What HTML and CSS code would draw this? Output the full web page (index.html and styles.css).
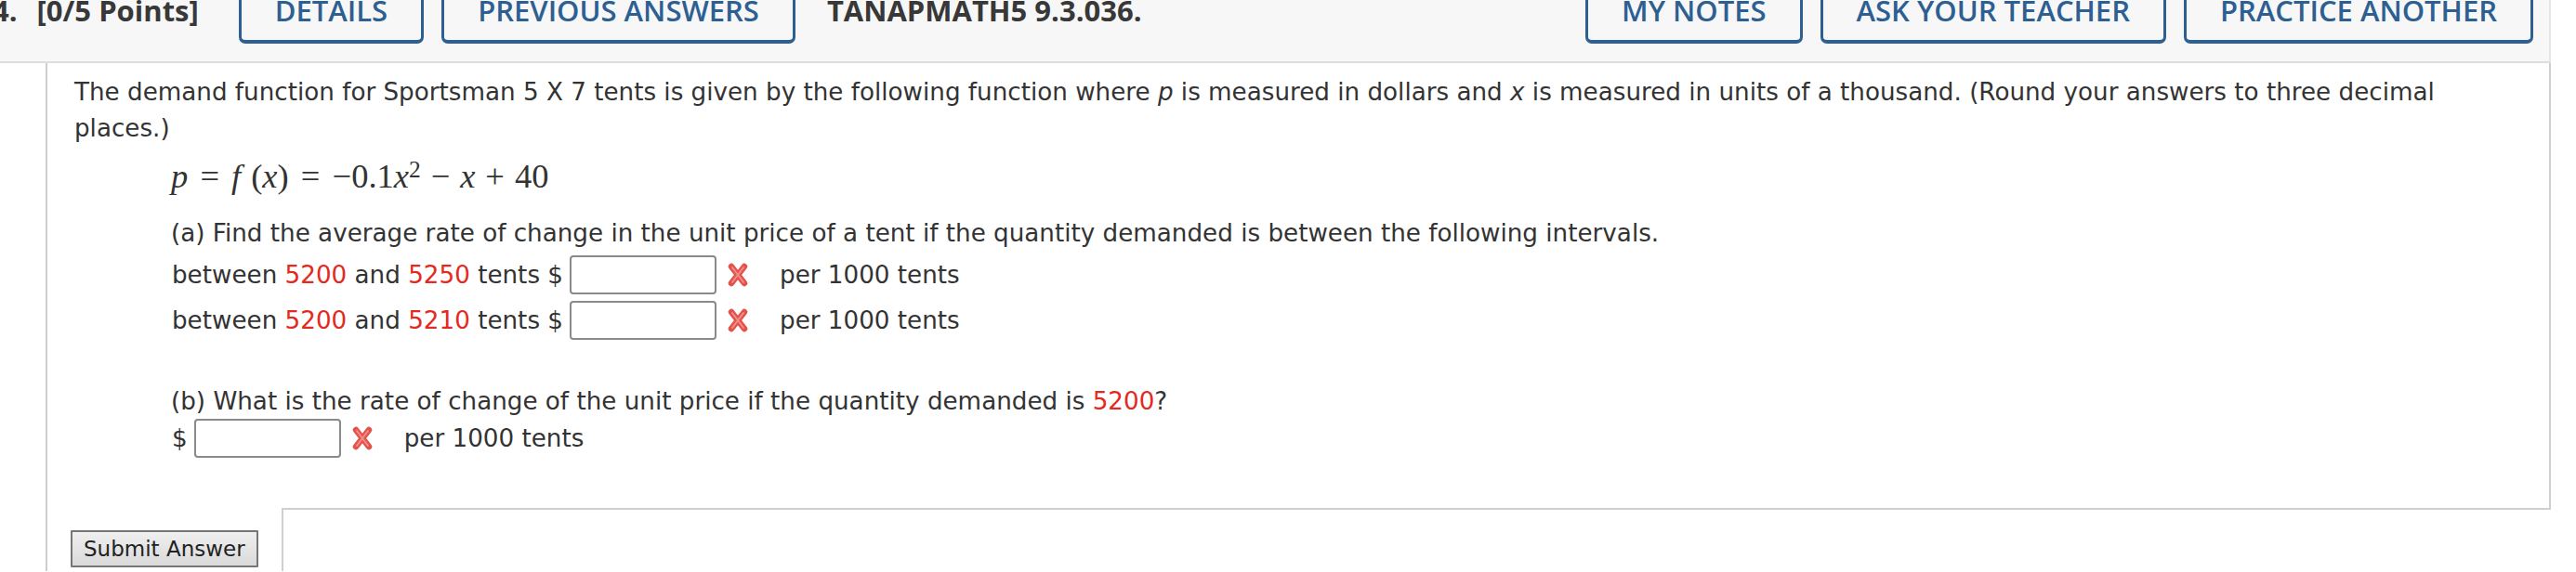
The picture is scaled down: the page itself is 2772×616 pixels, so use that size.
FILE: index.html
```html
<!DOCTYPE html>
<html>
<head>
<meta charset="utf-8">
<link rel="stylesheet" href="styles.css">
</head>
<body>
<header class="qhead">
  <span class="qtitle qnum">4.</span>
  <span class="qtitle qpts">[0/5 Points]</span>
  <div class="btn btn-first">DETAILS</div>
  <div class="btn">PREVIOUS ANSWERS</div>
  <span class="qtitle qid">TANAPMATH5 9.3.036.</span>
  <div class="spacer"></div>
  <div class="btn">MY NOTES</div>
  <div class="btn">ASK YOUR TEACHER</div>
  <div class="btn">PRACTICE ANOTHER</div>
</header>
<div class="qbox">
  <div class="qbody">
    <p class="intro">The demand function for Sportsman 5 X 7 tents is given by the following function where <i>p</i> is measured in dollars and <i>x</i> is measured in units of a thousand. (Round your answers to three decimal places.)</p>
    <div class="math"><i>p</i><span class="rel">=</span><i>f</i><span class="paren">(</span><i>x</i>)<span class="rel">=</span>−0.1<i>x</i><sup>2</sup><span class="bin">−</span><i>x</i><span class="bin">+</span>40</div>
    <p class="part">(a) Find the average rate of change in the unit price of a tent if the quantity demanded is between the following intervals.</p>
    <div class="row row1">
      <span class="txt">between <span class="red">5200</span> and <span class="red">5250</span> tents $</span>
      <span class="ans"></span>
      <svg class="xmark" width="24" height="26" viewBox="0 0 24 26"><path d="M5 4 L19 22 M19 4 L5 22" stroke="#e4514b" stroke-width="6.5" stroke-linecap="round" fill="none"/><path d="M6 5 L18 21 M18 5 L6 21" stroke="#f08f89" stroke-width="2" stroke-linecap="round" fill="none"/></svg>
      <span class="txt unit">per 1000 tents</span>
    </div>
    <div class="row row2">
      <span class="txt">between <span class="red">5200</span> and <span class="red">5210</span> tents $</span>
      <span class="ans"></span>
      <svg class="xmark" width="24" height="26" viewBox="0 0 24 26"><path d="M5 4 L19 22 M19 4 L5 22" stroke="#e4514b" stroke-width="6.5" stroke-linecap="round" fill="none"/><path d="M6 5 L18 21 M18 5 L6 21" stroke="#f08f89" stroke-width="2" stroke-linecap="round" fill="none"/></svg>
      <span class="txt unit">per 1000 tents</span>
    </div>
    <p class="part partb">(b) What is the rate of change of the unit price if the quantity demanded is <span class="red">5200</span>?</p>
    <div class="row rowb">
      <span class="txt">$</span>
      <span class="ans"></span>
      <svg class="xmark" width="24" height="26" viewBox="0 0 24 26"><path d="M5 4 L19 22 M19 4 L5 22" stroke="#e4514b" stroke-width="6.5" stroke-linecap="round" fill="none"/><path d="M6 5 L18 21 M18 5 L6 21" stroke="#f08f89" stroke-width="2" stroke-linecap="round" fill="none"/></svg>
      <span class="txt unit">per 1000 tents</span>
    </div>
  </div>
  <div class="qfoot">
    <div class="tab"><button class="submit">Submit Answer</button></div>
    <div class="fill"></div>
  </div>
</div>
</body>
</html>
```
FILE: styles.css
```css
html, body {
  margin: 0;
  padding: 0;
  background: #fff;
  overflow: hidden;
}
body {
  font-family: "DejaVu Sans", Verdana, sans-serif;
  color: #333;
  font-size: 26.2px;
}
.qhead {
  display: flex;
  align-items: flex-end;
  width: 2745px;
  height: 68px;
  box-sizing: border-box;
  padding: 0 17px 19px 0;
  background: #f7f7f7;
  border-bottom: 2px solid #dedede;
  border-right: 2px solid #e6e6e6;
  font-family: "Open Sans", sans-serif;
}
.qtitle {
  font-weight: 700;
  font-size: 31px;
  line-height: 42px;
  margin-bottom: 15px;
  color: #383838;
  white-space: nowrap;
  flex-shrink: 0;
}
.qnum { margin-left: -8px; }
.qpts { margin-left: 21px; }
.qid { margin-left: 34px; }
.spacer { flex: 1; }
.btn {
  flex-shrink: 0;
  height: 75px;
  box-sizing: border-box;
  display: flex;
  align-items: flex-end;
  padding: 0 36px 11px;
  margin-left: 19px;
  border: 3px solid #2d5f93;
  border-bottom-width: 4px;
  border-radius: 7px;
  color: #2d5f93;
  font-weight: 600;
  font-size: 31px;
  line-height: 42px;
  white-space: nowrap;
}
.btn-first { margin-left: 43px; }

.qbox {
  margin-left: 49px;
  width: 2696px;
}
.qbody {
  border-left: 2px solid #cfcfcf;
  border-right: 2px solid #cfcfcf;
  padding: 12px 60px 54px 29px;
}
.intro {
  margin: 0;
  line-height: 39px;
}
.math {
  margin: 12px 0 0 104px;
  font-family: "Liberation Serif", "Times New Roman", serif;
  font-size: 36.5px;
  line-height: 39px;
  white-space: nowrap;
}
.math sup {
  font-size: 0.7em;
  line-height: 0;
  vertical-align: 0.45em;
}
.math .rel { margin: 0 0.36em; }
.math .bin { margin: 0 0.3em; }
.math .paren { margin-left: 0.3em; }
.part {
  margin: 23px 0 0 104px;
  line-height: 39px;
}
.partb { margin-top: 47px; }
.row {
  display: flex;
  align-items: center;
  height: 42px;
  margin-left: 105px;
}
.row1 { margin-top: 4px; }
.row2 { margin-top: 7px; }
.rowb { margin-top: -1px; }
.txt {
  white-space: pre;
  line-height: 1.164;
}
.red { color: #e4291f; }
.ans {
  display: block;
  width: 158px;
  height: 42px;
  box-sizing: border-box;
  margin-left: 7px;
  border: 2px solid #8a8a8a;
  border-radius: 4px;
  background: #fff;
}
.xmark {
  display: block;
  margin-left: 11px;
}
.unit { margin-left: 33px; }

.qfoot {
  display: flex;
  height: 68px;
}
.tab {
  width: 256px;
  box-sizing: border-box;
  border-left: 2px solid #cfcfcf;
  border-right: 2px solid #cfcfcf;
  padding: 24px 0 0 25px;
}
.fill {
  flex: 1;
  border-top: 2px solid #cfcfcf;
}
.submit {
  display: block;
  margin: 0;
  height: 40px;
  padding: 0 12px;
  font-family: "DejaVu Sans", Verdana, sans-serif;
  font-size: 23px;
  color: #222;
  background: linear-gradient(#efefef, #dadada);
  border: 2px solid #767676;
  border-radius: 1px;
}
```
